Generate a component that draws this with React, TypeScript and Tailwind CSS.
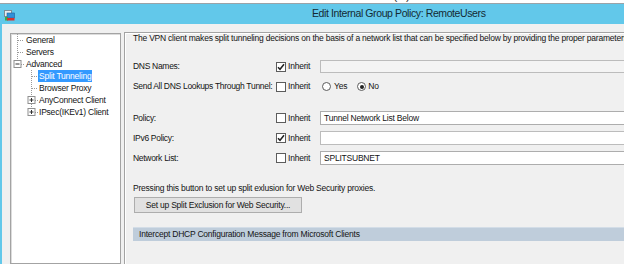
import React from "react";

type TreeRow = {
  label: string;
  kind: "leaf0" | "branch0" | "leaf1" | "branch1" | "lastBranch1";
  selected?: boolean;
};

const tree: TreeRow[] = [
  { label: "General", kind: "leaf0" },
  { label: "Servers", kind: "leaf0" },
  { label: "Advanced", kind: "branch0" },
  { label: "Split Tunneling", kind: "leaf1", selected: true },
  { label: "Browser Proxy", kind: "leaf1" },
  { label: "AnyConnect Client", kind: "branch1" },
  { label: "IPsec(IKEv1) Client", kind: "lastBranch1" },
];

const dot = { stroke: "#9a9a9a", strokeWidth: 1, strokeDasharray: "1 1" };

// small handle box drawn on the tree line, plus or minus
const Handle = ({ x, open }: { x: number; open: boolean }) => (
  <g>
    <rect x={x - 3.5} y={2.5} width={7} height={7} fill="#fff" stroke="#8f8f8f" />
    <line x1={x - 2} y1={6} x2={x + 2} y2={6} stroke="#333" />
    {!open && <line x1={x} y1={4} x2={x} y2={8} stroke="#333" />}
  </g>
);

const Connector = ({ kind }: { kind: TreeRow["kind"] }) => {
  const level1 = kind === "leaf1" || kind === "branch1" || kind === "lastBranch1";
  const w = level1 ? 27 : 14;
  return (
    <svg width={w} height={12} className="shrink-0">
      {kind === "leaf0" && (
        <>
          <line x1={6.5} y1={0} x2={6.5} y2={12} {...dot} />
          <line x1={7} y1={6.5} x2={13} y2={6.5} {...dot} />
        </>
      )}
      {kind === "branch0" && (
        <>
          <line x1={6.5} y1={0} x2={6.5} y2={2.5} {...dot} />
          <line x1={10} y1={6.5} x2={13} y2={6.5} {...dot} />
          <Handle x={6.5} open />
        </>
      )}
      {kind === "leaf1" && (
        <>
          <line x1={20.5} y1={0} x2={20.5} y2={12} {...dot} />
          <line x1={21} y1={6.5} x2={27} y2={6.5} {...dot} />
        </>
      )}
      {kind === "branch1" && (
        <>
          <line x1={20.5} y1={0} x2={20.5} y2={12} {...dot} />
          <line x1={24} y1={6.5} x2={27} y2={6.5} {...dot} />
          <Handle x={20.5} open={false} />
        </>
      )}
      {kind === "lastBranch1" && (
        <>
          <line x1={20.5} y1={0} x2={20.5} y2={2.5} {...dot} />
          <line x1={24} y1={6.5} x2={27} y2={6.5} {...dot} />
          <Handle x={20.5} open={false} />
        </>
      )}
    </svg>
  );
};

const Checkbox = ({ checked }: { checked?: boolean }) => (
  <div className="w-[10px] h-[10px] shrink-0 border border-[#5c5c5c] bg-white flex items-center justify-center">
    {checked && (
      <svg width={8} height={8} viewBox="0 0 8 8">
        <path d="M1 4.2 L3 6.3 L7 1.2" fill="none" stroke="#222" strokeWidth={1.5} />
      </svg>
    )}
  </div>
);

const Radio = ({ checked }: { checked?: boolean }) => (
  <div className="w-[9px] h-[9px] shrink-0 rounded-full border border-[#5c5c5c] bg-white flex items-center justify-center">
    {checked && <div className="w-[4px] h-[4px] rounded-full bg-[#222]" />}
  </div>
);

const FieldRow = ({
  label,
  checked,
  h,
  children,
}: {
  label: string;
  checked?: boolean;
  h: string;
  children: React.ReactNode;
}) => (
  <div className={`flex items-center ${h}`}>
    <div className="w-[143px] shrink-0 tracking-[-0.3px]">{label}</div>
    <Checkbox checked={checked} />
    <div className="w-[34px] shrink-0 pl-[2px]">Inherit</div>
    {children}
  </div>
);

const AppIcon = () => (
  <svg width={11} height={11} viewBox="0 0 11 11" className="shrink-0">
    <rect x={0.5} y={0.5} width={7} height={6} fill="#e8eef2" stroke="#7d8c96" />
    <rect x={3} y={3} width={7.5} height={5} fill="#2f8fd8" stroke="#1f5f9a" strokeWidth={0.6} />
    <rect x={1} y={7} width={3} height={3.5} fill="#3aa84a" />
    <rect x={3} y={8} width={7.5} height={2.5} fill="#d8322e" />
  </svg>
);

export default function App() {
  return (
    <div className="w-[624px] h-[264px] overflow-hidden bg-[#f0f0f0] flex flex-col font-['Liberation_Sans',Arial,sans-serif] text-[8.5px] tracking-[-0.22px] text-[#141414]">
      {/* strip of the window behind, only the bottom of its title shows */}
      <div className="h-[4px] shrink-0 bg-white overflow-hidden border-b border-[#9aa3a8]">
        <div className="ml-[292px] mt-[-11px] text-[12px] tracking-[1px] leading-[12px] text-[#333] whitespace-nowrap">
          Cisco ASDM 7.3(1) for ASA - 10.0.1.1
        </div>
      </div>

      {/* title bar */}
      <div className="h-[20px] shrink-0 bg-[#62c8ea] flex items-center">
        <div className="ml-[4px] mt-[2px]">
          <AppIcon />
        </div>
        <div className="ml-[297px] text-[10.5px] tracking-[-0.4px] text-[#142a33] whitespace-nowrap">
          Edit Internal Group Policy: RemoteUsers
        </div>
      </div>

      <div className="flex-1 flex min-h-0">
        <div className="w-[2px] shrink-0 bg-[#62c8ea]" />

        {/* navigation tree */}
        <div className="ml-[8px] mt-[9px] w-[111px] shrink-0 bg-white border border-[#a3a3a3] shadow-[inset_1px_1px_0_#dcdcdc]">
          {tree.map((row) => (
            <div key={row.label} className="flex items-center h-[12px] leading-[12px] whitespace-nowrap">
              <Connector kind={row.kind} />
              <span className={row.selected ? "bg-[#3399ff] text-white px-[1px]" : "pl-[1px]"}>
                {row.label}
              </span>
            </div>
          ))}
        </div>

        {/* settings panel */}
        <div className="ml-[3px] mt-[8px] w-[560px] shrink-0 border-l border-t border-[#a3a3a3] shadow-[inset_1px_1px_0_#ffffff] pl-[8px] flex flex-col whitespace-nowrap">
          <div className="h-[11px] leading-[11px]">
            The VPN client makes split tunneling decisions on the basis of a network list that can be specified below by providing the proper parameters
          </div>

          <div className="mt-[16px]">
            <FieldRow label="DNS Names:" checked h="h-[13px]">
              <div className="flex-1 h-full border border-[#bcbcbc] bg-[#f4f4f4]" />
            </FieldRow>
          </div>

          <div className="mt-[7px]">
            <FieldRow label="Send All DNS Lookups Through Tunnel:" h="h-[13px]">
              <div className="flex items-center ml-[2px]">
                <Radio />
                <span className="ml-[3px]">Yes</span>
                <div className="ml-[10px]">
                  <Radio checked />
                </div>
                <span className="ml-[2px]">No</span>
              </div>
            </FieldRow>
          </div>

          <div className="mt-[18px]">
            <FieldRow label="Policy:" h="h-[14px]">
              <div className="flex-1 h-full border border-[#adadad] bg-white pl-[3px] flex items-center">
                Tunnel Network List Below
              </div>
            </FieldRow>
          </div>

          <div className="mt-[6px]">
            <FieldRow label="IPv6 Policy:" checked h="h-[14px]">
              <div className="flex-1 h-full border border-[#bcbcbc] bg-white" />
            </FieldRow>
          </div>

          <div className="mt-[6px]">
            <FieldRow label="Network List:" h="h-[14px]">
              <div className="flex-1 h-full border border-[#adadad] bg-white pl-[3px] flex items-center">
                SPLITSUBNET
              </div>
            </FieldRow>
          </div>

          <div className="mt-[17px] h-[12px] leading-[12px]">
            Pressing this button to set up split exlusion for Web Security proxies.
          </div>

          <button className="mt-[3px] ml-[1px] w-[168px] h-[16px] bg-[#e1e1e1] border border-[#adadad] flex items-center justify-center">
            Set up Split Exclusion for Web Security...
          </button>

          <div className="mt-[14px] h-[14px] bg-[#bfcddb] border-t border-[#d3dde7] pl-[6px] flex items-center">
            Intercept DHCP Configuration Message from Microsoft Clients
          </div>
        </div>
      </div>
    </div>
  );
}
